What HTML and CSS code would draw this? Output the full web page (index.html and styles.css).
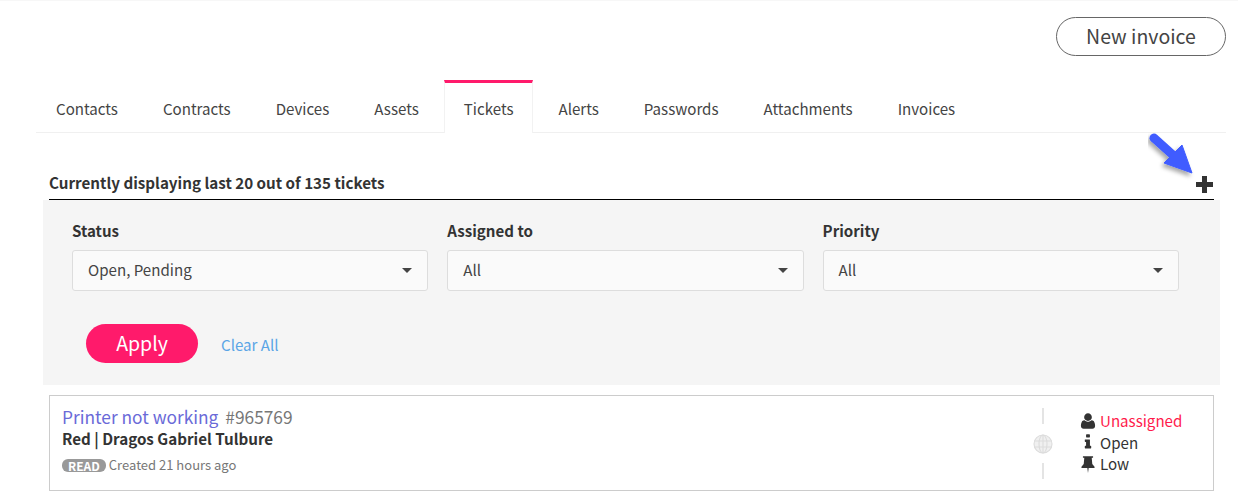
FILE: index.html
```html
<!DOCTYPE html>
<html lang="en">
<head>
<meta charset="utf-8">
<title>Tickets</title>
<link rel="stylesheet" href="styles.css">
</head>
<body>
<div class="page">
  <div class="top-bar">
    <a class="btn-new">New invoice</a>
  </div>
  <ul class="tabs">
    <li>Contacts</li>
    <li>Contracts</li>
    <li>Devices</li>
    <li>Assets</li>
    <li class="active">Tickets</li>
    <li>Alerts</li>
    <li>Passwords</li>
    <li>Attachments</li>
    <li>Invoices</li>
  </ul>
  <div class="section-head">
    <strong>Currently displaying last 20 out of 135 tickets</strong>
    <svg class="plus" viewBox="0 0 17 17"><path d="M6 0h5v6h6v5h-6v6H6v-6H0V6h6z" fill="#333"/></svg>
  </div>
  <div class="filters">
    <div class="filter-row">
      <div class="field">
        <label>Status</label>
        <div class="select">Open, Pending<i class="caret"></i></div>
      </div>
      <div class="field">
        <label>Assigned to</label>
        <div class="select">All<i class="caret"></i></div>
      </div>
      <div class="field">
        <label>Priority</label>
        <div class="select">All<i class="caret"></i></div>
      </div>
    </div>
    <div class="filter-actions">
      <a class="btn-apply">Apply</a>
      <a class="clear">Clear All</a>
    </div>
  </div>
  <div class="ticket">
    <div class="ticket-main">
      <div class="ticket-title"><a>Printer not working</a> <span>#965769</span></div>
      <div class="ticket-client">Red | Dragos Gabriel Tulbure</div>
      <div class="ticket-meta"><span class="badge">READ</span> Created 21 hours ago</div>
    </div>
    <div class="ticket-source">
      <i class="rule"></i>
      <svg class="globe" viewBox="0 0 20 20" fill="none" stroke="#dcdcdc" stroke-width="1.1">
        <circle cx="10" cy="10" r="9" fill="#f0f0f0"/>
        <ellipse cx="10" cy="10" rx="4" ry="9"/>
        <path d="M1 7h18M1 13h18M10 1v18"/>
      </svg>
      <i class="rule"></i>
    </div>
    <ul class="ticket-info">
      <li class="unassigned"><svg viewBox="0 0 1792 1792"><path fill="#333" d="M1600 1405q0 120-73 189.5t-194 69.5H459q-121 0-194-69.5T192 1405q0-53 3.5-103.5t14-109T236 1084t43-97.5 62-81 85.5-53.5T538 832q9 0 42 21.5t74.5 48 108 48T896 971t133.5-21.5 108-48 74.5-48 42-21.5q61 0 111.5 20t85.5 53.5 62 81 43 97.5 26.5 108.5 14 109 3.5 103.5zm-320-893q0 159-112.5 271.5T896 896 624.5 783.5 512 512t112.5-271.5T896 128t271.5 112.5T1280 512z"/></svg>Unassigned</li>
      <li><svg viewBox="0 0 1792 1792"><path fill="#333" d="M1216 1344v128q0 26-19 45t-45 19H640q-26 0-45-19t-19-45v-128q0-26 19-45t45-19h64V896h-64q-26 0-45-19t-19-45V704q0-26 19-45t45-19h384q26 0 45 19t19 45v576h64q26 0 45 19t19 45zM1088 192v192q0 26-19 45t-45 19H768q-26 0-45-19t-19-45V192q0-26 19-45t45-19h256q26 0 45 19t19 45z"/></svg>Open</li>
      <li><svg viewBox="0 0 14 16"><path fill="#333" d="M2.500 1h9v1.500H10.300L10.800 8l2 2.400V11.500H7.600L7 16l-.6-4.500H1.200V10.400L3.200 8l.5-5.500H2.500z"/></svg>Low</li>
    </ul>
  </div>
  <svg class="arrow" viewBox="0 0 60 60" width="60" height="60">
    <defs>
      <filter id="arrow-shadow" x="-30%" y="-30%" width="170%" height="170%">
        <feDropShadow dx="-2" dy="3" stdDeviation="2" flood-color="#000" flood-opacity=".35"/>
      </filter>
    </defs>
    <g filter="url(#arrow-shadow)" fill="#3f5cff" stroke="#3f5cff">
      <path d="M6 9L26 27" stroke-width="9" stroke-linecap="round" fill="none"/>
      <path d="M34 16L44 44 16 34z" stroke-width="1"/>
    </g>
  </svg>
</div>
</body>
</html>
```

FILE: styles.css
```css
* { box-sizing: border-box; }
html, body { margin: 0; padding: 0; height: 491px; overflow: hidden; }
body { background: #fff; color: #333; font-family: "Noto Sans CJK JP", "Noto Sans", sans-serif; font-size: 15.1px; line-height: 22px; }
ul { list-style: none; margin: 0; padding: 0; }

.page { position: relative; padding: 17px 12px 0 36px; height: 491px; overflow: hidden; border-top: 1px solid #f7f7f7; }

.top-bar { display: flex; justify-content: flex-end; height: 63px; margin-top: -1px; }
.btn-new { width: 170px; height: 39px; border: 1px solid #666; border-radius: 20px; font-size: 19.5px; line-height: 36px; text-align: center; color: #444; }

.tabs { display: flex; height: 53px; border-bottom: 1px solid #f0f0f0; }
.tabs li { padding: 14px 20px 0; margin-right: 5px; color: #444; border-top: 3px solid transparent; }
.tabs li.active { border-top-color: #ff1a6b; border-left: 1px solid #f2f2f2; border-right: 1px solid #f2f2f2; padding: 14px 18.5px 0 19px; height: 53px; margin-right: 5.5px; margin-bottom: -1px; background: #fff; }

.section-head { display: flex; justify-content: space-between; align-items: flex-end; margin: 0 0 0 13px; width: 1165px; height: 67px; padding: 0 1px 6px 0; border-bottom: 1px solid #000; }
.section-head strong { font-size: 15.2px; font-weight: 700; color: #333; }
.plus { width: 17px; height: 17px; margin-bottom: 0; }

.filters { margin-left: 7px; width: 1177px; height: 185px; background: #f5f5f5; padding: 19px 29px 0; }
.filter-row { display: flex; gap: 19px; }
.field { width: 356.3px; }
.field label { display: block; font-weight: 700; height: 31px; }
.select { position: relative; height: 41px; padding: 0 15px; border: 1px solid #ddd; border-radius: 3px; background: #fafafa; line-height: 37px; color: #444; }
.caret { position: absolute; right: 15px; top: 17px; border: 5px solid transparent; border-top-color: #444; border-bottom: 0; }

.filter-actions { display: flex; align-items: center; margin: 33px 0 0 14px; }
.btn-apply { width: 112px; height: 39px; border-radius: 20px; background: #ff1a6b; color: #fff; font-size: 19.5px; line-height: 38px; text-align: center; }
.clear { margin-left: 23px; color: #5aa5e6; margin-top: 1px; }

.ticket { display: flex; margin: 10px 0 0 13px; width: 1165px; height: 96px; border: 1px solid #ccc; padding: 10px 0 0 12px; }
.ticket-main { flex: 1; }
.ticket-title { font-size: 17.33px; line-height: 22px; color: #777; }
.ticket-title a { color: #6a6ad8; margin-right: 3px; }
.ticket-client { font-size: 15.2px; font-weight: 700; line-height: 21px; }
.ticket-meta { display: flex; align-items: center; gap: 3px; margin-top: 6px; font-size: 13px; line-height: 20px; color: #777; }
.badge { height: 13px; padding: 0 6px; border-radius: 6px; background: #999; color: #fff; font-size: 12px; font-weight: 700; line-height: 13px; }

.ticket-source { display: flex; flex-direction: column; align-items: center; width: 22px; margin-right: 25px; padding-top: 2px; }
.rule { display: block; width: 2px; height: 16px; background: #e4e4e4; }
.globe { width: 20px; height: 20px; margin: 10px 0 9px; }

.ticket-info { width: 134px; line-height: 21.5px; padding-top: 4px; }
.ticket-info li { display: flex; align-items: center; }
.ticket-info svg { width: 18px; height: 18px; margin-right: 3px; flex: none; }
.unassigned { color: #ff1a4b; }

.arrow { position: absolute; left: 1148px; top: 128px; }
```
